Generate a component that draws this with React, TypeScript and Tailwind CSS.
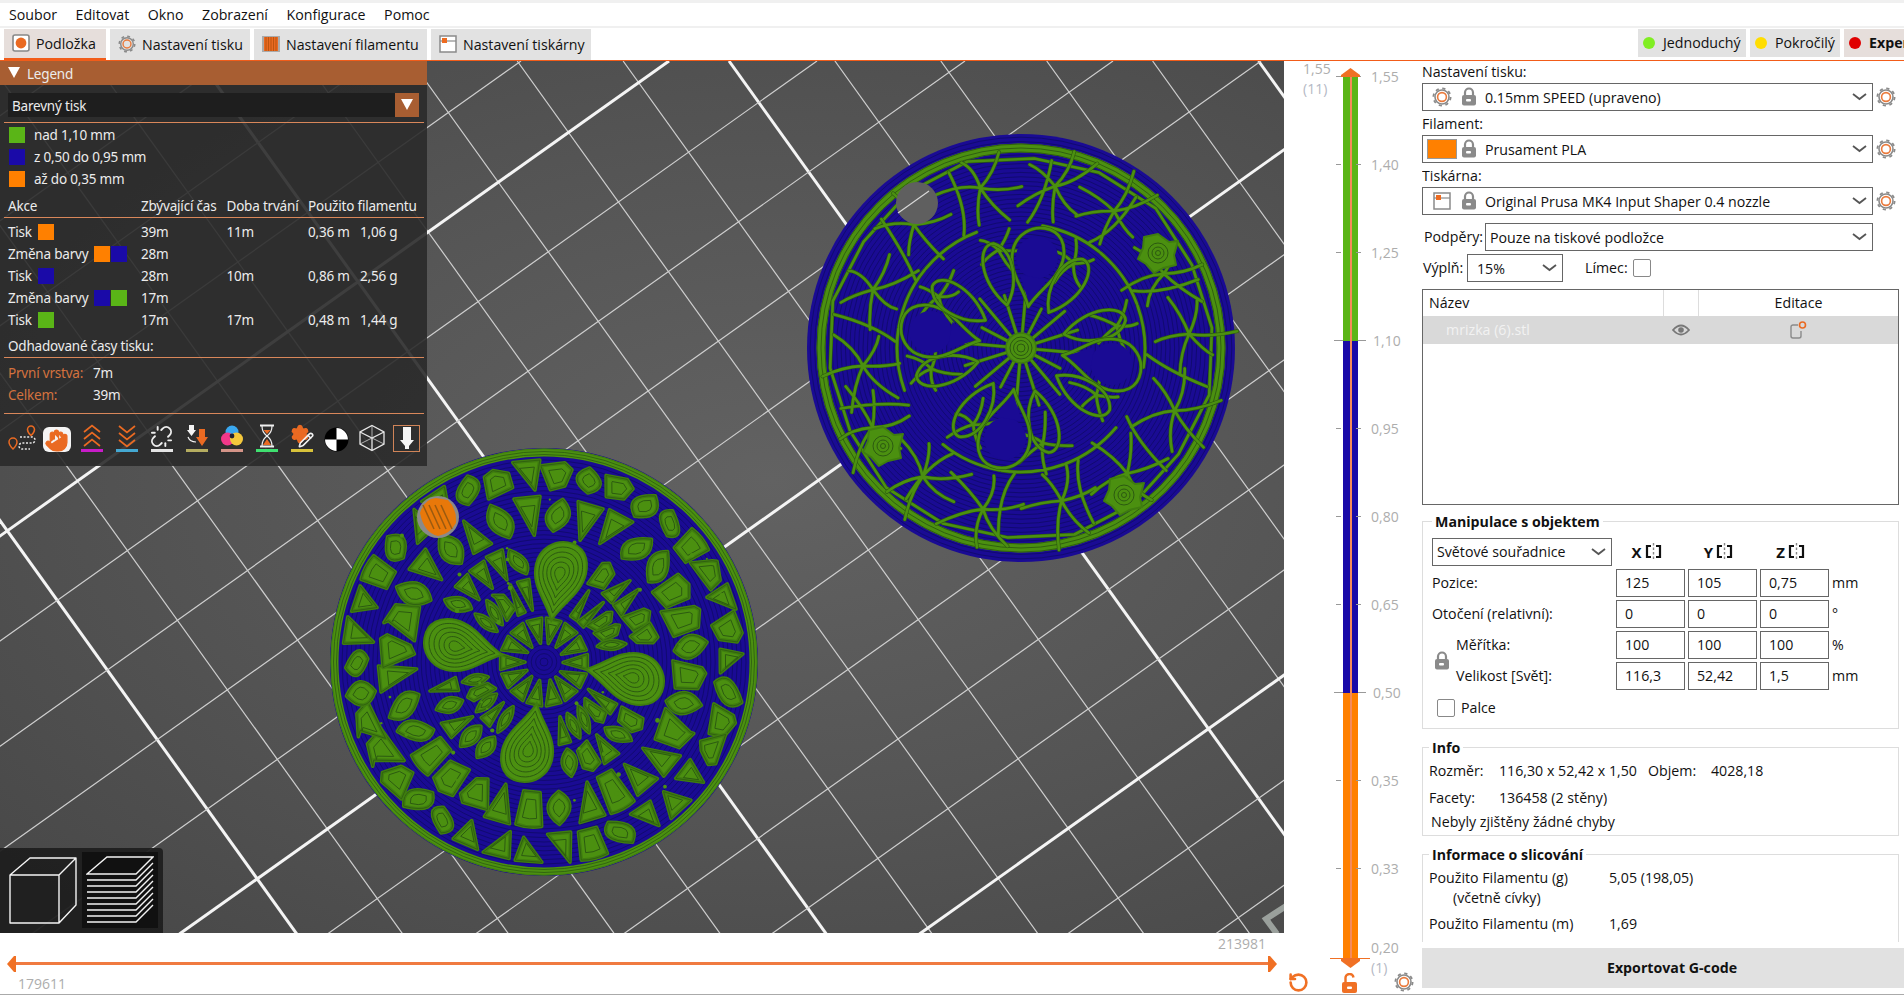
import { Hand, Pencil, RotateCcw, Settings, Unlink } from "lucide-react";
import type { ReactNode } from "react";

// ---------- scene helpers ----------
const rand = (seed: number) => () => {
  seed = (seed + 0x6d2b79f5) | 0;
  let t = Math.imul(seed ^ (seed >>> 15), 1 | seed);
  t = (t + Math.imul(t ^ (t >>> 7), 61 | t)) ^ t;
  return ((t ^ (t >>> 14)) >>> 0) / 4294967296;
};
const rad = (d: number) => (d * Math.PI) / 180;
const pol = (r: number, a: number) =>
  `${(r * Math.sin(rad(a))).toFixed(1)} ${(-r * Math.cos(rad(a))).toFixed(1)}`;
const xy = (r: number, a: number) => [r * Math.sin(rad(a)), -r * Math.cos(rad(a))];

const GREEN = "#4b9010";
const EDGE = "#3f7d0f";
const DARK = "#2c5a10";
const DROP = "M0 -42 C-8 -60 -26 -72 -25 -95 C-24 -112 -10 -122 3 -122 C19 -122 27 -110 26 -93 C24 -72 7 -60 0 -42 Z";

function cellPath(type: number, r0: number, r1: number, a0: number, a1: number, skew: number) {
  const am = (a0 + a1) / 2;
  const rm = (r0 + r1) / 2;
  const w = a1 - a0;
  if (type === 0) {
    const ins = w * 0.1;
    return `M${pol(r0, a0 + ins)} L${pol(r1, a0)} Q${pol(r1 + 3, am)} ${pol(r1, a1)} L${pol(r0, a1 - ins)} Z`;
  }
  if (type === 1) return `M${pol(r0, am + skew)} L${pol(r1, a0)} L${pol(r1, a1)} Z`;
  if (type === 2) return `M${pol(r1, am + skew)} L${pol(r0, a0)} L${pol(r0, a1)} Z`;
  if (type === 3)
    return `M${pol(r0, am - skew)} Q${pol(rm, a0 - w * 0.45)} ${pol(r1, am + skew)} Q${pol(rm, a1 + w * 0.45)} ${pol(r0, am - skew)} Z`;
  if (type === 5)
    return `M${pol(r0, a0 + skew)} L${pol(r1 - 4, a0 - skew)} L${pol(r1, am + skew)} L${pol(r1 - 6, a1)} L${pol(r0 + 5, a1 - skew)} Z`;
  return `M${pol(r0 + 3, am)} C${pol(r0 + 2, a0)} ${pol(r1, a0)} ${pol(r1 - 1, am)} C${pol(r1, a1)} ${pol(r0 + 2, a1)} ${pol(r0 + 3, am)} Z`;
}

function Cell({ d, r, a }: { d: string; r: number; a: number }) {
  const [cx, cy] = xy(r, a);
  return (
    <g>
      <path d={d} fill={GREEN} stroke={EDGE} strokeWidth={3.6} strokeLinejoin="round" />
      <path d={d} fill="none" stroke={DARK} strokeWidth={0.8} strokeLinejoin="round" />
      <path
        d={d}
        fill="none"
        stroke={DARK}
        strokeWidth={1.8}
        strokeLinejoin="round"
        transform={`translate(${cx} ${cy}) scale(.55) translate(${-cx} ${-cy})`}
      />
    </g>
  );
}

function Rings() {
  const rows = [];
  for (let r = 4; r < 212; r += 4.4) rows.push(<circle key={r} r={r} fill="none" stroke="#110a70" strokeWidth={1} />);
  return <g>{rows}</g>;
}

function FilledDisc() {
  const rng = rand(11);
  const cells: ReactNode[] = [];
  const push = (t: number, r0: number, r1: number, a0: number, a1: number) => {
    cells.push(
      <Cell
        key={cells.length}
        d={cellPath(t, r0, r1, a0, a1, (rng() - 0.5) * (a1 - a0) * 0.7)}
        r={(r0 + r1) / 2}
        a={(a0 + a1) / 2}
      />
    );
  };
  for (let i = 0; i < 14; i++) {
    const w = 360 / 14;
    push(1, 19, 44, i * w + 3, i * w + w - 3);
  }
  const mid = [3, 5, 1, 3, 2, 5, 3];
  for (let q = 0; q < 4; q++) {
    const base = 10 + q * 90;
    for (let i = 0; i < 5; i++) {
      const a0 = base + 20 + i * 10.4;
      push(mid[Math.floor(rng() * 7)], 52 + rng() * 6, 84, a0, a0 + 8);
      push(mid[Math.floor(rng() * 7)], 90, 120 - rng() * 4, a0, a0 + 8.4);
    }
  }
  const band2 = [5, 1, 2, 3, 5, 1, 0, 3];
  for (let i = 0; i < 32; i++) {
    const w = 11.25;
    push(band2[Math.floor(rng() * 8)], 127 + rng() * 5, 166 - rng() * 4, i * w + 0.8, i * w + w - 1.4);
  }
  const band3 = [3, 5, 1, 2, 3, 5, 0];
  for (let i = 0; i < 38; i++) {
    const w = 360 / 38;
    push(band3[Math.floor(rng() * 7)], 171 + rng() * 6, 202 - rng() * 4, i * w + 0.6, i * w + w - 1.2);
  }
  const dots: ReactNode[] = [];
  for (let i = 0; i < 50; i++) {
    const [x, y] = xy(50 + rng() * 150, rng() * 360);
    dots.push(<circle key={i} cx={x} cy={y} r={1 + rng() * 1.4} fill={GREEN} />);
  }
  return (
    <g transform="translate(544 662)">
      <circle r={214} fill="#1a0b94" />
      <Rings />
      <circle r={209.5} fill="none" stroke={GREEN} strokeWidth={8} />
      <circle r={213} fill="none" stroke={EDGE} strokeWidth={1} />
      <circle r={210.5} fill="none" stroke={DARK} strokeWidth={0.8} />
      <circle r={207.5} fill="none" stroke={DARK} strokeWidth={0.8} />
      {cells}
      {dots}
      {[0, 1, 2, 3].map((q) => (
        <g key={q} transform={`rotate(${10 + q * 90})`}>
          <path d={DROP} fill={GREEN} stroke={EDGE} strokeWidth={2} />
          {[0.84, 0.68, 0.52, 0.36, 0.2].map((s) => (
            <path
              key={s}
              d={DROP}
              fill="none"
              stroke={DARK}
              strokeWidth={1}
              transform={`translate(0 -90) scale(${s}) translate(0 90)`}
              vectorEffect="non-scaling-stroke"
            />
          ))}
        </g>
      ))}
      <g transform="translate(-106 -145)">
        <circle r={21} fill="#8a8a8a" />
        <path d="M-18 -4 Q-14 -18 -2 -19 L10 -17 Q19 -8 18 6 Q12 17 0 19 Q-14 16 -18 -4 Z" fill="#e8780a" />
        {[-10, -4, 2, 8].map((o) => (
          <path key={o} d={`M${o - 5} -12 L${o + 6} 12`} stroke="#9a5a10" strokeWidth={1.5} />
        ))}
      </g>
    </g>
  );
}

function Web({ d }: { d: string }) {
  return (
    <g fill="none" strokeLinecap="round" strokeLinejoin="round">
      <path d={d} stroke={DARK} strokeWidth={3.8} />
      <path d={d} stroke={GREEN} strokeWidth={2.6} />
    </g>
  );
}

function WebDisc() {
  const rng = rand(29);
  const lines: string[] = [];
  for (let i = 0; i < 16; i++) {
    const a = i * 22.5 + 5;
    lines.push(`M${pol(14, a)} L${pol(i % 4 === 1 ? 44 : 55 + rng() * 14, a)}`);
  }
  const branch = (r: number, a: number, n: number, len: number) => {
    for (let i = 0; i < n; i++) {
      const [x, y] = xy(r, a);
      const dir = (i * 360) / n + rng() * 30;
      const [bx, by] = xy(len * (0.8 + rng() * 0.5), dir);
      const [mx, my] = xy(len * 0.55, dir + 6 + rng() * 14);
      lines.push(`M${x.toFixed(1)} ${y.toFixed(1)} q${mx.toFixed(1)} ${my.toFixed(1)} ${bx.toFixed(1)} ${by.toFixed(1)}`);
    }
  };
  for (let i = 0; i < 14; i++) branch(158 + rng() * 12, (i * 360) / 14 + 6 + rng() * 8, 6, 38);
  for (let i = 0; i < 8; i++) branch(88 + rng() * 14, i * 45 + 32, 5, 24);
  for (let i = 0; i < 12; i++) {
    if (i % 4 === 3) continue;
    const a = i * 30 + 10;
    lines.push(`M${pol(124, a)} Q${pol(128, a + 15)} ${pol(124, a + 29)}`);
  }
  for (let i = 0; i < 12; i++) {
    const a = i * 30 + 3;
    lines.push(`M${pol(126, a)} Q${pol(150, a + 6)} ${pol(190, a + 3 + rng() * 8)}`);
  }
  const rim: string[] = [];
  for (let i = 0; i < 18; i++) {
    const a = i * 20 + 4;
    rim.push(`${i ? "L" : "M"}${pol(190 + (i % 3) * 2, a)}`);
  }
  const blobs = [
    [137, -95],
    [103, 147],
    [-138, 98],
  ];
  return (
    <g transform="translate(1021 348)">
      <circle r={214} fill="#1a0b94" />
      <Rings />
      <circle r={200} fill="none" stroke={GREEN} strokeWidth={9} />
      {[204, 200, 196].map((r) => (
        <circle key={r} r={r} fill="none" stroke={DARK} strokeWidth={0.9} />
      ))}
      <Web d={`${rim.join(" ")} Z`} />
      <Web d={lines.join(" ")} />
      {[0, 1, 2, 3].map((q) => (
        <g key={q} transform={`rotate(${10 + q * 90})`}>
          <circle cy={-92} r={21} fill="#1a0b94" />
          <path d="M0 -46 L-14 -72 L14 -72 Z" fill="#1a0b94" />
          <Web d={DROP} />
          <g transform="rotate(28)">
            <Web d="M0 -45 C-18 -62 -24 -96 -6 -108 C10 -112 20 -76 0 -45" />
          </g>
          <g transform="rotate(62)">
            <Web d="M0 -45 C-20 -76 -10 -112 6 -108 C24 -96 18 -62 0 -45" />
          </g>
        </g>
      ))}
      {blobs.map(([x, y]) => (
        <g key={x} transform={`translate(${x} ${y})`}>
          <path d="M0 -19 L11 -11 L20 -12 L16 2 L18 12 L5 15 L-4 20 L-12 11 L-20 6 L-15 -5 L-14 -16 Z" fill={GREEN} stroke={EDGE} strokeWidth={2} strokeLinejoin="round" />
          <circle r={10} fill="none" stroke={DARK} strokeWidth={1} />
          <circle r={6} fill="none" stroke={DARK} strokeWidth={1} />
          <circle r={2.5} fill="none" stroke={DARK} strokeWidth={1} />
        </g>
      ))}
      <circle r={15} fill={GREEN} stroke={EDGE} strokeWidth={1.5} />
      {[11, 7.5, 4].map((r) => (
        <circle key={r} r={r} fill="none" stroke={DARK} strokeWidth={1} />
      ))}
      <g transform="translate(-104 -145)">
        <circle r={21} fill="#5f5f5f" />
        <path d="M-19 10 L12 -12" stroke="#d8d8d8" strokeWidth={1.2} />
      </g>
    </g>
  );
}

function BedGrid() {
  const lines: ReactNode[] = [];
  for (let k = 0; k < 21; k++) {
    const x = -330 + 105.9 * k;
    const thick = k % 5 === 0;
    lines.push(
      <line key={`b${k}`} x1={x} y1={0} x2={x + 873 * 0.718} y2={873} stroke={thick ? "#f4f4f4" : "#cfcfcf"} strokeWidth={thick ? 3 : 1.2} />
    );
  }
  for (let k = -4; k < 16; k++) {
    const x = 669 + 148 * k;
    const thick = k % 5 === 0;
    lines.push(
      <line key={`a${k}`} x1={x} y1={0} x2={x - 873 / 0.71} y2={873} stroke={thick ? "#f4f4f4" : "#cfcfcf"} strokeWidth={thick ? 3 : 1.2} />
    );
  }
  return <g>{lines}</g>;
}

function Scene() {
  return (
    <svg className="absolute inset-0" width={1284} height={873} viewBox="0 61 1284 873">
      <g transform="translate(0 61)">
        <BedGrid />
      </g>
      <path d="M1286 906 L1266 919 L1277 934" fill="none" stroke="#9aa09c" strokeWidth={6} />
      <FilledDisc />
      <WebDisc />
    </svg>
  );
}

// ---------- small icons ----------
function Gear({ size = 20 }: { size?: number }) {
  return (
    <svg width={size} height={size} viewBox="0 0 20 20" className="shrink-0">
      <circle cx={10} cy={10} r={7} fill="none" stroke="#8a8a8a" strokeWidth={1.6} />
      <circle cx={10} cy={10} r={8.6} fill="none" stroke="#8a8a8a" strokeWidth={1.8} strokeDasharray="3.2 3.55" />
      <circle cx={10} cy={10} r={4.4} fill="none" stroke="#ea7a3c" strokeWidth={1.6} />
    </svg>
  );
}

function Lock() {
  return (
    <svg width={16} height={19} viewBox="0 0 16 19" className="shrink-0">
      <path d="M4 8V5.5a4 4 0 0 1 8 0V8" fill="none" stroke="#8a8a8a" strokeWidth={2.2} />
      <rect x={1} y={8} width={14} height={10.5} rx={2} fill="#8a8a8a" />
      <rect x={5} y={12} width={5} height={2.4} rx={1} fill="#fff" />
    </svg>
  );
}

function Chevron() {
  return (
    <svg width={15} height={8} viewBox="0 0 15 8" className="shrink-0">
      <path d="M1 1 L7.5 6 L14 1" fill="none" stroke="#555" strokeWidth={1.8} />
    </svg>
  );
}

function PrinterIcon() {
  return (
    <svg width={18} height={18} viewBox="0 0 18 18" className="shrink-0">
      <rect x={1} y={1} width={16} height={16} fill="#fff" stroke="#8a8a8a" strokeWidth={1.5} />
      <path d="M1 6 H17" stroke="#8a8a8a" strokeWidth={1.2} />
      <rect x={3} y={3} width={5} height={5} fill="#ed6b21" />
    </svg>
  );
}

function AxisIcon() {
  return (
    <svg width={17} height={17} viewBox="0 0 17 17">
      <path d="M6 3H2V14H6 M11 3H15V14H11" fill="none" stroke="#111" strokeWidth={2.2} />
      <path d="M8.5 0V17" stroke="#888" strokeWidth={1.4} strokeDasharray="2.5 2" />
    </svg>
  );
}

function Bar({ color }: { color: string }) {
  return <div className="mt-px h-[3px] w-[22px]" style={{ backgroundColor: color }} />;
}

function ToolSlot({ children }: { children: ReactNode }) {
  return <div className="flex h-[30px] w-[35px] flex-col items-center justify-end">{children}</div>;
}

function LegendIcons() {
  return (
    <div className="mt-[8px] flex pl-[4px]">
      <ToolSlot>
        <svg width={30} height={28} viewBox="0 0 30 28" fill="none">
          <path d="M6 14 a4 4 0 0 1 4 4 c0 3 -4 7 -4 7 s-4 -4 -4 -7 a4 4 0 0 1 4 -4Z" stroke="#ea6a22" strokeWidth={1.5} />
          <path d="M24 2 a3.5 3.5 0 0 1 3.5 3.5 c0 3 -3.5 6 -3.5 6 s-3.5 -3 -3.5 -6 a3.5 3.5 0 0 1 3.5 -3.5Z" stroke="#ea6a22" strokeWidth={1.5} />
          <path d="M13 13 H25 a2.5 2.5 0 0 1 0 6 H15 a2.5 2.5 0 0 0 0 6 H23" stroke="#e8e8e8" strokeWidth={1.5} strokeDasharray="2 1.6" />
        </svg>
      </ToolSlot>
      <ToolSlot>
        <div className="flex h-[25px] w-[28px] items-center justify-center rounded-[6px] bg-[#f4f4f4]">
          <Hand size={25} color="#ea6a22" fill="#ea6a22" strokeWidth={1.2} className="-mb-[3px]" />
        </div>
      </ToolSlot>
      <ToolSlot>
        <svg width={22} height={24} viewBox="0 0 22 24" fill="none" stroke="#ea6a22" strokeWidth={1.7}>
          <path d="M3 8 L11 1.5 L19 8 M3 15 L11 8.5 L19 15 M3 22 L11 15.5 L19 22" />
        </svg>
        <Bar color="#c81cc8" />
      </ToolSlot>
      <ToolSlot>
        <svg width={22} height={24} viewBox="0 0 22 24" fill="none" stroke="#ea6a22" strokeWidth={1.7}>
          <path d="M3 2 L11 8.5 L19 2 M3 9 L11 15.5 L19 9 M3 16 L11 22.5 L19 16" />
        </svg>
        <Bar color="#44a8d2" />
      </ToolSlot>
      <ToolSlot>
        <Unlink size={23} color="#eeeeee" strokeWidth={2} />
        <Bar color="#e4e4e4" />
      </ToolSlot>
      <ToolSlot>
        <svg width={24} height={24} viewBox="0 0 24 24">
          <path d="M4 1 H9 V6 H11 L6.5 12 L2 6 H4 Z" fill="#f4f4f4" />
          <path d="M3 13 Q5 18 11 18" fill="none" stroke="#f4f4f4" strokeWidth={1.2} />
          <path d="M14 5 H20 V13 H23 L17 22 L11 13 H14 Z" fill="#ea6a22" />
        </svg>
        <Bar color="#b5ad60" />
      </ToolSlot>
      <ToolSlot>
        <svg width={22} height={24} viewBox="0 0 22 24">
          <circle cx={11} cy={8} r={6.5} fill="#3aa8f0" />
          <circle cx={6.5} cy={15} r={6.5} fill="#f2388a" />
          <circle cx={15.5} cy={15} r={6.5} fill="#f4c83c" />
          <circle cx={11} cy={12} r={2.4} fill="#223" />
        </svg>
        <Bar color="#d49488" />
      </ToolSlot>
      <ToolSlot>
        <svg width={18} height={24} viewBox="0 0 18 24" fill="none">
          <path d="M2 1.5 H16 M2 22.5 H16" stroke="#f0f0f0" strokeWidth={2} />
          <path d="M4 2 C4 9 8 11 9 12 C10 11 14 9 14 2 M4 22 C4 15 8 13 9 12 C10 13 14 15 14 22" stroke="#f0f0f0" strokeWidth={1.2} />
          <path d="M5.5 6 H12.5 L9 10 Z M9 15 L13 21 H5 Z" fill="#ea6a22" />
        </svg>
        <Bar color="#3fe070" />
      </ToolSlot>
      <ToolSlot>
        <div className="relative h-[24px] w-[24px]">
          <Settings size={20} color="#ea6a22" fill="#ea6a22" strokeWidth={2} className="absolute left-0 top-0" />
          <Pencil size={16} color="#f2f2f2" strokeWidth={2.4} className="absolute bottom-0 right-0" />
        </div>
        <Bar color="#d8c23a" />
      </ToolSlot>
      <ToolSlot>
        <svg width={25} height={25} viewBox="0 0 24 24">
          <circle cx={12} cy={12} r={11.5} fill="#000" />
          <path d="M12 1 A11 11 0 0 1 23 12 H12 Z M12 12 H1 A11 11 0 0 0 12 23 Z" fill="#fff" />
        </svg>
      </ToolSlot>
      <ToolSlot>
        <svg width={26} height={28} viewBox="0 0 26 28" fill="none" stroke="#e8e8e8" strokeWidth={1}>
          <path d="M13 1.5 L25 8 V20 L13 26.5 L1 20 V8 Z M1 8 L13 14 L25 8 M13 14 V26.5" strokeWidth={1.3} />
          <path d="M13 1.5 V14 M1 20 L13 14 L25 20" strokeWidth={0.7} />
        </svg>
      </ToolSlot>
      <ToolSlot>
        <div className="flex h-[27px] w-[27px] items-center justify-center border border-[#d08458]">
          <svg width={16} height={24} viewBox="0 0 16 24">
            <path d="M4 1 H12 V14 H15 L10 20 V23 H6 V20 L1 14 H4 Z" fill="#f6f6f6" />
          </svg>
        </div>
      </ToolSlot>
    </div>
  );
}

// ---------- legend ----------
const LG = "#5ab517";
const LB = "#1a0aa8";
const LO = "#ff8000";

function Swatch({ color }: { color: string }) {
  return <div className="h-[16px] w-[16px] shrink-0" style={{ backgroundColor: color }} />;
}

function Sep() {
  return <div className="ml-[4px] h-px w-[420px] bg-[#d9875a]" />;
}

const legendRows = [
  { label: "Tisk", colors: [LO], rest: "39m", dur: "11m", len: "0,36 m", wt: "1,06 g" },
  { label: "Změna barvy", colors: [LO, LB], rest: "28m", dur: "", len: "", wt: "" },
  { label: "Tisk", colors: [LB], rest: "28m", dur: "10m", len: "0,86 m", wt: "2,56 g" },
  { label: "Změna barvy", colors: [LB, LG], rest: "17m", dur: "", len: "", wt: "" },
  { label: "Tisk", colors: [LG], rest: "17m", dur: "17m", len: "0,48 m", wt: "1,44 g" },
];

function Legend() {
  return (
    <div className="absolute left-0 top-0 h-[405px] w-[427px] bg-[#2a2a2a]/90 font-['Noto_Sans',sans-serif] text-[13.5px] tracking-[-0.2px] text-[#ececec]">
      <div className="flex h-[24px] items-center gap-[7px] bg-[#a85e32] pl-[8px]">
        <svg width={12} height={11} viewBox="0 0 12 11">
          <path d="M0 0 H12 L6 11 Z" fill="#fff" />
        </svg>
        <span className="pt-[2px]">Legend</span>
      </div>
      <div className="ml-[8px] mt-[8px] flex h-[24px] w-[411px] items-center justify-between bg-[#1e1e1e] pl-[4px]">
        <span className="pt-[2px]">Barevný tisk</span>
        <div className="flex h-full w-[24px] items-center justify-center bg-[#a85e32]">
          <svg width={12} height={11} viewBox="0 0 12 11">
            <path d="M0 0 H12 L6 11 Z" fill="#fff" />
          </svg>
        </div>
      </div>
      <div className="mt-[5px]">
        <Sep />
      </div>
      <div className="pt-px">
        {[
          [LG, "nad 1,10 mm"],
          [LB, "z 0,50 do 0,95 mm"],
          [LO, "až do 0,35 mm"],
        ].map(([c, t]) => (
          <div key={t} className="flex h-[22px] items-center gap-[9px] pl-[9px]">
            <Swatch color={c} />
            <span>{t}</span>
          </div>
        ))}
      </div>
      <div className="mt-[5px] grid h-[22px] grid-cols-[133px_85.5px_81.5px_auto] items-center pl-[8px]">
        <span>Akce</span>
        <span>Zbývající čas</span>
        <span>Doba trvání</span>
        <span>Použito filamentu</span>
      </div>
      <Sep />
      <div className="mt-[3px]">
        {legendRows.map((r, i) => (
          <div key={i} className="grid h-[22px] grid-cols-[133px_85.5px_81.5px_52px_auto] items-center pl-[8px]">
            <div className="flex items-center">
              <span className="mr-[6px]">{r.label}</span>
              <div className="flex gap-[1px]">
                {r.colors.map((c, j) => (
                  <Swatch key={j} color={c} />
                ))}
              </div>
            </div>
            <span>{r.rest}</span>
            <span>{r.dur}</span>
            <span>{r.len}</span>
            <span>{r.wt}</span>
          </div>
        ))}
      </div>
      <div className="mt-[4px] flex h-[22px] items-center pl-[8px]">Odhadované časy tisku:</div>
      <Sep />
      <div className="mt-[4px] flex h-[22px] items-center pl-[8px]">
        <span className="w-[85px] text-[#d4723e]">První vrstva:</span>
        <span>7m</span>
      </div>
      <div className="flex h-[22px] items-center pl-[8px]">
        <span className="w-[85px] text-[#d4723e]">Celkem:</span>
        <span>39m</span>
      </div>
      <div className="mt-[7px]">
        <Sep />
      </div>
      <LegendIcons />
    </div>
  );
}

function ViewToolbar() {
  return (
    <div className="absolute bottom-0 left-0 flex h-[85px] w-[163px] items-center gap-[5px] rounded-tr-[4px] bg-[#1f1f1f]/95 pl-[9px]">
      <svg width={68} height={69} viewBox="0 0 68 69" fill="none" stroke="#f4f4f4" strokeWidth={1.4}>
        <path d="M1 19 H50 V67 H1 Z M1 19 L21 2 H67 L50 19 M67 2 V49 L50 67" strokeLinejoin="round" />
      </svg>
      <div className="flex h-[76px] w-[76px] items-center justify-center bg-[#111]">
        <svg width={68} height={68} viewBox="0 0 68 68" fill="none" stroke="#f4f4f4" strokeWidth={1.4}>
          <path d="M1 18 L21 1 H67 L50 18 Z" />
          {[24, 30, 36, 42, 48, 54, 60, 66].map((y) => (
            <path key={y} d={`M1 ${y} H50 L67 ${y - 17}`} />
          ))}
        </svg>
      </div>
    </div>
  );
}

// ---------- sliders ----------
const ticks = [
  ["1,55", 77],
  ["1,40", 165],
  ["1,25", 253],
  ["1,10", 341],
  ["0,95", 429],
  ["0,80", 517],
  ["0,65", 605],
  ["0,50", 693],
  ["0,35", 781],
  ["0,33", 869],
] as const;

function VerticalSlider() {
  return (
    <div className="relative h-full w-[138px] shrink-0 font-['Open_Sans',sans-serif] text-[14px] text-[#adadad]">
      <div className="ml-[59px] mt-[16px] flex w-[15px] flex-col">
        <div className="h-[264px] bg-[#5ab517]" />
        <div className="h-[352px] bg-[#1a0aa8]" />
        <div className="h-[265px] bg-[#ff8000]" />
      </div>
      <div className="absolute left-[65.5px] top-[16px] h-[881px] w-[2px] bg-[#f58a5a]" />
      {ticks.map(([t, y]) => {
        const major = t === "1,10" || t === "0,50";
        return (
          <div key={t} className="absolute left-0 flex h-[20px] w-full items-center" style={{ top: y - 61 - 10 }}>
            <div className={major ? "ml-[50px] h-px w-[9px] bg-[#999]" : "ml-[52px] h-px w-[5px] bg-[#999]"} />
            <div className={major ? "ml-[15px] h-px w-[8px] bg-[#999]" : "ml-[15px] h-px w-[5px] bg-[#999]"} />
            <span className={major ? "ml-[7px]" : "ml-[10px]"}>{t}</span>
          </div>
        );
      })}
      <div className="absolute left-[19px] top-[-2px] leading-[20px]">
        <div>1,55</div>
        <div className="text-[#b4b8c4]">(11)</div>
      </div>
      <svg className="absolute left-[57px] top-[7px]" width={19} height={9} viewBox="0 0 19 9">
        <path d="M9.5 0 L19 7 V9 H0 V7 Z" fill="#f07024" />
      </svg>
      <div className="absolute left-[46px] top-[897px] h-[1.5px] w-[40px] bg-[#f07024]" />
      <svg className="absolute left-[57px] top-[897px]" width={19} height={10} viewBox="0 0 19 10">
        <path d="M0 0 H19 V3 L9.5 10 L0 3 Z" fill="#f07024" />
      </svg>
      <div className="absolute left-[87px] top-[877px] leading-[20px]">
        <div>0,20</div>
        <div className="text-[#b4b8c4]">(1)</div>
      </div>
      <RotateCcw size={21} color="#f07024" strokeWidth={3} className="absolute left-[4px] top-[911px]" />
      <svg className="absolute left-[57px] top-[912px]" width={17} height={20} viewBox="0 0 17 20">
        <path d="M4.5 9 V5.5 a4 4 0 0 1 8 -1" fill="none" stroke="#f07024" strokeWidth={2.4} />
        <rect x={1} y={9} width={15} height={11} rx={2} fill="#f07024" />
        <rect x={6} y={13.5} width={5} height={2.4} rx={1} fill="#fff" />
      </svg>
      <div className="absolute left-[110px] top-[911px]">
        <Gear size={20} />
      </div>
    </div>
  );
}

function HorizontalSlider() {
  return (
    <div className="flex h-[61px] flex-col font-['Open_Sans',sans-serif] text-[14px] text-[#adadad]">
      <div className="flex h-[22px] items-center justify-end pr-[18px]">213981</div>
      <div className="flex h-[18px] items-center pl-[7px] pr-[7px]">
        <svg width={9} height={16} viewBox="0 0 9 16">
          <path d="M9 0 V16 H7 L0 8 L7 0 Z" fill="#f07024" />
        </svg>
        <div className="h-[3px] flex-1 bg-[#f07a40]" />
        <svg width={9} height={16} viewBox="0 0 9 16">
          <path d="M0 0 V16 H2 L9 8 L2 0 Z" fill="#f07024" />
        </svg>
      </div>
      <div className="flex h-[21px] items-center pl-[18px]">179611</div>
    </div>
  );
}

// ---------- sidebar ----------
function Combo({ icon, text, className }: { icon?: ReactNode; text: string; className: string }) {
  return (
    <div className={`flex h-[28px] items-center border border-[#666] pr-[5px] ${className}`}>
      {icon}
      <span className="flex-1 whitespace-nowrap pt-px">{text}</span>
      <Chevron />
    </div>
  );
}

function PresetRow({ label, icon, text }: { label: string; icon: ReactNode; text: string }) {
  return (
    <div>
      <div className="flex h-[24px] items-center pt-[2px]">{label}</div>
      <div className="flex items-center">
        <div className="flex h-[28px] w-[451px] items-center border border-[#666] pr-[5px]">
          <div className="flex w-[38px] shrink-0 justify-center">{icon}</div>
          <Lock />
          <span className="ml-[8px] flex-1 pt-px">{text}</span>
          <Chevron />
        </div>
        <div className="ml-[3px]">
          <Gear />
        </div>
      </div>
    </div>
  );
}

function Field({ v }: { v: string }) {
  return <div className="flex h-[28px] items-center border border-[#666] pl-[8px]">{v}</div>;
}

function GroupBox({ title, className, children }: { title: string; className: string; children: ReactNode }) {
  return (
    <div className={`relative w-[477px] border border-[#ddd] ${className}`}>
      <span className="absolute top-[-11px] bg-white px-[3px] font-bold leading-[22px]" style={{ left: title === "Manipulace s objektem" ? 9 : 6 }}>
        {title}
      </span>
      {children}
    </div>
  );
}

function Sidebar() {
  return (
    <div className="h-full w-[482px] shrink-0 overflow-hidden font-['Open_Sans',sans-serif] text-[14.2px] text-[#111]">
      <div className="-mt-[2px]">
        <PresetRow label="Nastavení tisku:" icon={<Gear />} text="0.15mm SPEED (upraveno)" />
        <PresetRow
          label="Filament:"
          icon={<div className="h-[20px] w-[30px] border border-[#999] bg-[#ff8000]" />}
          text="Prusament PLA"
        />
        <PresetRow label="Tiskárna:" icon={<PrinterIcon />} text="Original Prusa MK4 Input Shaper 0.4 nozzle" />
      </div>
      <div className="mt-[8px] flex items-center">
        <span className="w-[63px] pl-[2px]">Podpěry:</span>
        <Combo text="Pouze na tiskové podložce" className="w-[388px] pl-[4px]" />
      </div>
      <div className="mt-[3px] flex items-center">
        <span className="w-[45px] pl-px">Výplň:</span>
        <Combo text="15%" className="w-[96px] pl-[9px]" />
        <span className="ml-[22px]">Límec:</span>
        <div className="ml-[5px] h-[18px] w-[18px] rounded-[2px] border border-[#888]" />
      </div>
      <div className="mt-[7px] h-[216px] w-[477px] border border-[#666]">
        <div className="flex h-[26px] items-center">
          <span className="w-[240px] pl-[6px]">Název</span>
          <div className="h-full w-[36px] border-x border-[#ddd]" />
          <span className="flex-1 text-center">Editace</span>
        </div>
        <div className="flex h-[28px] items-center bg-[#d9d9d9] text-[#f2f2f2]">
          <span className="w-[240px] pl-[23px]">mrizka (6).stl</span>
          <div className="flex w-[36px] justify-center">
            <svg width={18} height={12} viewBox="0 0 18 12">
              <path d="M1 6 Q9 -3 17 6 Q9 15 1 6 Z" fill="none" stroke="#777" strokeWidth={1.8} />
              <circle cx={9} cy={6} r={2.8} fill="#777" />
            </svg>
          </div>
          <div className="flex flex-1 justify-center">
            <svg width={17} height={18} viewBox="0 0 17 18" fill="none">
              <path d="M8 4 H3 a2 2 0 0 0 -2 2 V15 a2 2 0 0 0 2 2 H9 a2 2 0 0 0 2 -2 V10" stroke="#8a8a8a" strokeWidth={1.4} />
              <circle cx={12.5} cy={4} r={3} stroke="#ea6a22" strokeWidth={1.6} />
            </svg>
          </div>
        </div>
      </div>
      <GroupBox title="Manipulace s objektem" className="mt-[16px] h-[208px] pl-[9px] pt-[16px]">
        <div className="grid grid-cols-[181px_69px_69px_69px_auto] gap-x-[3px] gap-y-[3px]">
          <div className="flex h-[28px] w-[180px] items-center border border-[#666] pl-[4px] pr-[5px]">
            <span className="flex-1">Světové souřadnice</span>
            <Chevron />
          </div>
          {["X", "Y", "Z"].map((a) => (
            <div key={a} className="flex items-center justify-center gap-[3px] pr-[8px] text-[15px] font-bold">
              {a}
              <AxisIcon />
            </div>
          ))}
          <div />
          <div className="flex items-center">Pozice:</div>
          <Field v="125" />
          <Field v="105" />
          <Field v="0,75" />
          <div className="flex items-center">mm</div>
          <div className="flex items-center">Otočení (relativní):</div>
          <Field v="0" />
          <Field v="0" />
          <Field v="0" />
          <div className="pt-[3px]">°</div>
          <div className="row-span-2 flex items-center">
            <div className="w-[24px] pl-[2px]">
              <Lock />
            </div>
            <div className="flex flex-col gap-[3px]">
              <span className="flex h-[28px] items-center">Měřítka:</span>
              <span className="flex h-[28px] items-center">Velikost [Svět]:</span>
            </div>
          </div>
          <Field v="100" />
          <Field v="100" />
          <Field v="100" />
          <div className="flex items-center">%</div>
          <Field v="116,3" />
          <Field v="52,42" />
          <Field v="1,5" />
          <div className="flex items-center">mm</div>
        </div>
        <div className="ml-[5px] mt-[7px] flex items-center gap-[6px]">
          <div className="h-[18px] w-[18px] rounded-[2px] border border-[#888]" />
          <span>Palce</span>
        </div>
      </GroupBox>
      <GroupBox title="Info" className="mt-[18px] h-[89px] pl-[6px] pt-[11px]">
        <div className="flex h-[24px] items-center">
          <span className="w-[70px]">Rozměr:</span>
          <span className="w-[149px]">116,30 x 52,42 x 1,50</span>
          <span className="w-[63px]">Objem:</span>
          <span>4028,18</span>
        </div>
        <div className="mt-[3px] flex h-[24px] items-center">
          <span className="w-[70px]">Facety:</span>
          <span>136458 (2 stěny)</span>
        </div>
        <div className="flex h-[24px] items-center pl-[2px]">Nebyly zjištěny žádné chyby</div>
      </GroupBox>
      <GroupBox title="Informace o slicování" className="mt-[18px] h-[88px] border-b-0 pl-[6px] pt-[12px]">
        <div className="flex h-[22px] items-center">
          <span className="w-[180px]">Použito Filamentu (g)</span>
          <span>5,05 (198,05)</span>
        </div>
        <div className="flex h-[18px] items-center pl-[24px]">(včetně cívky)</div>
        <div className="mt-[6px] flex h-[22px] items-center">
          <span className="w-[180px]">Použito Filamentu (m)</span>
          <span>1,69</span>
        </div>
      </GroupBox>
      <div className="mt-[6px] flex h-[40px] w-[500px] items-center justify-center bg-[#e1e1e1] font-bold">
        Exportovat G-code
      </div>
    </div>
  );
}

function ModeTab({ color, label, width, bold }: { color: string; label: string; width: string; bold?: boolean }) {
  return (
    <div className={`flex h-[28px] shrink-0 items-center gap-[8px] pl-[5px] ${width} ${bold ? "bg-[#e6dedb] font-bold" : "bg-[#e2e2e2]"}`}>
      <span className="h-[12px] w-[12px] rounded-full" style={{ backgroundColor: color }} />
      <span>{label}</span>
    </div>
  );
}

function TabIcon({ kind }: { kind: string }) {
  if (kind === "bed") {
    return (
      <svg width={18} height={18} viewBox="0 0 18 18">
        <rect x={1} y={1} width={16} height={16} rx={2} fill="#fff" stroke="#888" strokeWidth={1.6} />
        <circle cx={9} cy={9} r={5.4} fill="#ea6a22" />
      </svg>
    );
  }
  if (kind === "print") return <Gear size={18} />;
  if (kind === "fil") {
    return (
      <svg width={18} height={18} viewBox="0 0 18 18">
        <rect x={0} y={1} width={18} height={16} fill="#aaa" />
        <rect x={2} y={2} width={14} height={14} fill="#ea6a22" />
        {[4, 6.5, 9, 11.5, 14].map((x) => (
          <path key={x} d={`M${x} 2 V16`} stroke="#b8520f" strokeWidth={0.9} />
        ))}
      </svg>
    );
  }
  return <PrinterIcon />;
}

const tabs = [
  { label: "Podložka", kind: "bed", width: "w-[102px]", active: true },
  { label: "Nastavení tisku", kind: "print", width: "w-[140px]", active: false },
  { label: "Nastavení filamentu", kind: "fil", width: "w-[173px]", active: false },
  { label: "Nastavení tiskárny", kind: "printer", width: "w-[160px]", active: false },
];

export default function App() {
  return (
    <div className="flex h-[995px] w-[1904px] flex-col overflow-hidden bg-white font-['Open_Sans',sans-serif] text-[14.2px] text-[#111]">
      <div className="flex h-[28px] items-center gap-[18.5px] border-b-2 border-t-[3px] border-[#f0f0f0] pl-[9px]">
        {["Soubor", "Editovat", "Okno", "Zobrazení", "Konfigurace", "Pomoc"].map((m) => (
          <span key={m}>{m}</span>
        ))}
      </div>
      <div className="flex h-[33px] items-start gap-[4px] border-b border-[#f25c19] pl-[4px] pt-px">
        {tabs.map((t) => (
          <div
            key={t.label}
            className={`flex h-[31px] shrink-0 items-center gap-[6px] whitespace-nowrap pl-[8px] ${t.width} ${t.active ? "border-b-2 border-[#f25c19] bg-[#e6dedb]" : "bg-[#e2e2e2]"}`}
          >
            <TabIcon kind={t.kind} />
            <span>{t.label}</span>
          </div>
        ))}
        <div className="w-[1039px] shrink-0" />
        <ModeTab color="#80ee22" label="Jednoduchý" width="w-[108px]" />
        <ModeTab color="#ffdd00" label="Pokročilý" width="w-[90px]" />
        <ModeTab color="#e00000" label="Expert" width="w-[80px]" bold />
      </div>
      <div className="flex h-[934px]">
        <div className="flex w-[1284px] shrink-0 flex-col">
          <div className="relative h-[872px] overflow-hidden bg-[radial-gradient(ellipse_at_60%_48%,#626262_0%,#555555_50%,#484848_95%)]">
            <Scene />
            <Legend />
            <ViewToolbar />
          </div>
          <HorizontalSlider />
        </div>
        <VerticalSlider />
        <Sidebar />
      </div>
      <div className="h-px bg-[#aaa]" />
    </div>
  );
}
